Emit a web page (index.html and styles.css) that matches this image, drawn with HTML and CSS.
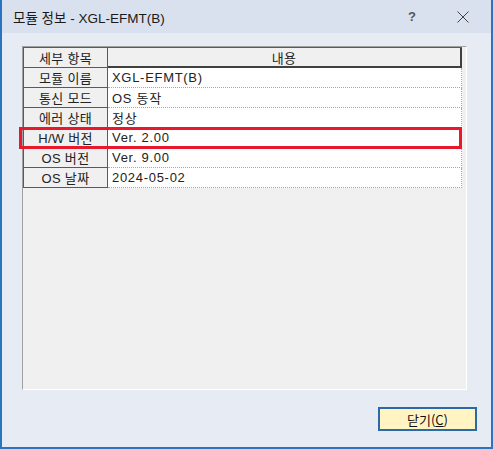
FILE: index.html
```html
<!DOCTYPE html>
<html lang="ko">
<head>
<meta charset="utf-8">
<link rel="stylesheet" href="styles.css">
</head>
<body>
<div class="window">
  <div class="titlebar">
    <span class="title">모듈 정보 - XGL-EFMT(B)</span>
    <span class="help">?</span>
    <span class="close">
      <svg width="12" height="12" viewBox="0 0 12 12"><path d="M0.5 0.5 L11.5 11.5 M11.5 0.5 L0.5 11.5" stroke="#444" stroke-width="1" fill="none"/></svg>
    </span>
  </div>
  <div class="client">
    <div class="listview">
      <div class="grid">
        <div class="hcell">세부 항목</div>
        <div class="hcell hwide">내용</div>
        <div class="lcell">모듈 이름</div><div class="vcell">XGL-EFMT(B)</div>
        <div class="lcell">통신 모드</div><div class="vcell">OS 동작</div>
        <div class="lcell">에러 상태</div><div class="vcell">정상</div>
        <div class="lcell">H/W 버전</div><div class="vcell">Ver. 2.00</div>
        <div class="lcell">OS 버전</div><div class="vcell">Ver. 9.00</div>
        <div class="lcell">OS 날짜</div><div class="vcell">2024-05-02</div>
      </div>
      <div class="highlight"></div>
    </div>
    <div class="footer">
      <button class="btn">닫기(<u>C</u>)</button>
    </div>
  </div>
</div>
</body>
</html>
```
FILE: styles.css
```css
html, body {
  margin: 0;
  padding: 0;
  background: #e6ebf4;
}
body {
  font-family: "Liberation Sans", "Noto Sans CJK KR", sans-serif;
  color: #000;
}
.window {
  width: 489px;
  height: 447px;
  border-left: 2px solid #2a74c0;
  border-right: 2px solid #2a74c0;
  border-bottom: 2px solid #2a74c0;
  background: #e6ebf4;
  display: flex;
  flex-direction: column;
}
.titlebar {
  height: 33px;
  background: #d9e1ee;
  display: flex;
  align-items: center;
  padding-left: 11px;
  padding-right: 22px;
  box-sizing: border-box;
}
.title {
  font-size: 13.5px;
  color: #1a1a1a;
  flex: 1;
  padding-top: 1px;
}
.help {
  font-size: 13px;
  font-weight: bold;
  color: #555;
  margin-right: 41px;
}
.close {
  display: flex;
  align-items: center;
}
.client {
  flex: 1;
  display: flex;
  flex-direction: column;
  padding: 13px 0 0 20px;
}
.listview {
  position: relative;
  width: 445px;
  height: 344px;
  box-sizing: border-box;
  background: #f0f0f0;
  border-top: 1px solid #a0a0a0;
  border-left: 1px solid #a0a0a0;
  border-right: 1px solid #ffffff;
  border-bottom: 1px solid #ffffff;
}
.grid {
  display: grid;
  grid-template-columns: 84px 354px;
  grid-auto-rows: 20px;
  font-size: 13px;
  letter-spacing: 0.3px;
  border-left: 1px solid #5a5a5a;
  border-top: 1px solid #5a5a5a;
  width: 439px;
  box-sizing: border-box;
}
.hcell, .lcell {
  background: #f0f0f0;
  border-right: 1px solid #5a5a5a;
  border-bottom: 1px solid #5a5a5a;
  display: flex;
  align-items: center;
  justify-content: center;
  box-sizing: border-box;
  color: #222;
}
.hwide {
  border-right: 2px solid #404040;
  border-bottom: 2px solid #404040;
}
.vcell {
  background: #ffffff;
  border-right: 1px dotted #a8a8a8;
  border-bottom: 1px dotted #a8a8a8;
  display: flex;
  align-items: center;
  padding-left: 4px;
  box-sizing: border-box;
  color: #222;
  letter-spacing: 0.7px;
}
.highlight {
  position: absolute;
  left: -4px;
  top: 80px;
  width: 443px;
  height: 22px;
  border: 3px solid #e8192c;
  box-sizing: border-box;
}
.footer {
  display: flex;
  justify-content: flex-end;
  padding: 17px 14px 0 0;
}
.btn {
  width: 99px;
  height: 24px;
  background: #fff4c2;
  border: 2px solid #2a6aa8;
  font-family: "Noto Sans CJK KR", "Liberation Sans", sans-serif;
  font-size: 13px;
  color: #111;
  padding: 0;
  margin: 0;
}
```
